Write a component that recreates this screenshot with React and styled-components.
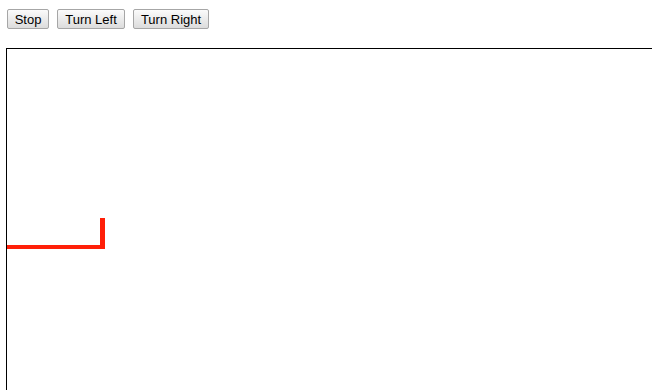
import React from 'react';
import styled, { createGlobalStyle } from 'styled-components';

const GlobalStyle = createGlobalStyle`
  html, body {
    margin: 0;
    padding: 0;
    background: #fff;
    overflow: hidden;
  }
`;

const Page = styled.div`
  padding: 9px 0 0 7px;
  font-family: "Liberation Sans", Arial, sans-serif;
`;

const Toolbar = styled.div`
  display: flex;
  gap: 8px;
`;

const Button = styled.button`
  box-sizing: border-box;
  height: 20px;
  padding: 0;
  white-space: nowrap;
  font-family: "Liberation Sans", Arial, sans-serif;
  font-size: 13px;
  color: #000;
  background: linear-gradient(#fbfbfb, #dcdcdc);
  border: 1px solid #a6a6a6;
  border-radius: 2px;
  width: ${(p) => p.$w}px;
`;

const Board = styled.div`
  margin: 19px 0 0 -1px;
  width: 800px;
  height: 420px;
  border: 1px solid #000;
  box-sizing: border-box;
`;

function Snake() {
  return (
    <svg width="798" height="418" viewBox="0 0 798 418">
      <rect x="0" y="196" width="98" height="4" fill="#ff1f08" />
      <rect x="93" y="169" width="5" height="31" fill="#ff1f08" />
    </svg>
  );
}

export default function App() {
  return (
    <Page>
      <GlobalStyle />
      <Toolbar>
        <Button $w={42}>Stop</Button>
        <Button $w={68}>Turn Left</Button>
        <Button $w={76}>Turn Right</Button>
      </Toolbar>
      <Board>
        <Snake />
      </Board>
    </Page>
  );
}
